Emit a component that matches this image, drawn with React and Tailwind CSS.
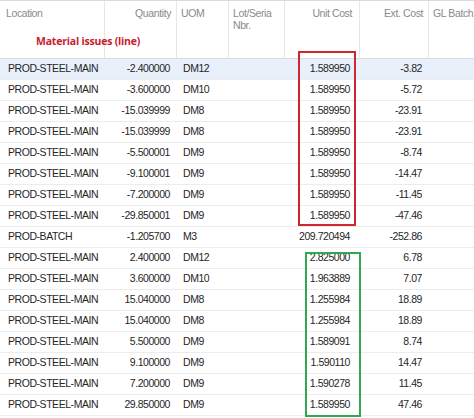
import React from 'react';

const rows = [
  ['PROD-STEEL-MAIN', '-2.400000', 'DM12', '1.589950', '-3.82'],
  ['PROD-STEEL-MAIN', '-3.600000', 'DM10', '1.589950', '-5.72'],
  ['PROD-STEEL-MAIN', '-15.039999', 'DM8', '1.589950', '-23.91'],
  ['PROD-STEEL-MAIN', '-15.039999', 'DM8', '1.589950', '-23.91'],
  ['PROD-STEEL-MAIN', '-5.500001', 'DM9', '1.589950', '-8.74'],
  ['PROD-STEEL-MAIN', '-9.100001', 'DM9', '1.589950', '-14.47'],
  ['PROD-STEEL-MAIN', '-7.200000', 'DM9', '1.589950', '-11.45'],
  ['PROD-STEEL-MAIN', '-29.850001', 'DM9', '1.589950', '-47.46'],
  ['PROD-BATCH', '-1.205700', 'M3', '209.720494', '-252.86'],
  ['PROD-STEEL-MAIN', '2.400000', 'DM12', '2.825000', '6.78'],
  ['PROD-STEEL-MAIN', '3.600000', 'DM10', '1.963889', '7.07'],
  ['PROD-STEEL-MAIN', '15.040000', 'DM8', '1.255984', '18.89'],
  ['PROD-STEEL-MAIN', '15.040000', 'DM8', '1.255984', '18.89'],
  ['PROD-STEEL-MAIN', '5.500000', 'DM9', '1.589091', '8.74'],
  ['PROD-STEEL-MAIN', '9.100000', 'DM9', '1.590110', '14.47'],
  ['PROD-STEEL-MAIN', '7.200000', 'DM9', '1.590278', '11.45'],
  ['PROD-STEEL-MAIN', '29.850000', 'DM9', '1.589950', '47.46'],
];

const cols = 'grid grid-cols-[105px_72px_52px_56px_75px_69px_1fr]';

export default function App() {
  return (
    <div className="relative w-[474px] h-[418px] overflow-hidden bg-white font-['Liberation_Sans',Arial,sans-serif]">
      {/* Header */}
      <div className={`${cols} h-[59px] border-t border-b border-[#dcdcdc] text-[10.5px] leading-[11.5px] tracking-[-0.4px] text-[#8a8a8a]`}>
        <div className="border-r border-[#e6e6e6] pl-[6px] pt-[7px]">Location</div>
        <div className="border-r border-[#e6e6e6] pr-[5px] pt-[7px] text-right">Quantity</div>
        <div className="border-r border-[#e6e6e6] pl-[4px] pt-[7px]">UOM</div>
        <div className="border-r border-[#e6e6e6] pl-[4px] pt-[7px]">Lot/Seria<br />Nbr.</div>
        <div className="border-r border-[#e6e6e6] pr-[7px] pt-[7px] text-right">Unit Cost</div>
        <div className="border-r border-[#e6e6e6] pr-[5px] pt-[7px] text-right">Ext. Cost</div>
        <div className="pl-[4px] pt-[7px] whitespace-nowrap">GL Batch</div>
      </div>

      {/* Rows */}
      {rows.map((r, i) => (
        <div
          key={i}
          className={`${cols} h-[21px] items-center border-b border-[#ececec] text-[10.5px] tracking-[-0.45px] text-[#262626] ${i === 0 ? 'bg-[#e8f1fb]' : 'bg-white'}`}
        >
          <div className="pl-[8px] whitespace-nowrap">{r[0]}</div>
          <div className="pr-[7px] text-right">{r[1]}</div>
          <div className="pl-[6px]">{r[2]}</div>
          <div />
          <div className="pr-[10px] text-right">{r[3]}</div>
          <div className="pr-[7px] text-right">{r[4]}</div>
          <div />
        </div>
      ))}

      {/* Annotations */}
      <div className="absolute left-[36px] top-[34px] text-[10.5px] font-bold tracking-[-0.2px] text-[#c8202f] font-['Open_Sans',sans-serif] whitespace-nowrap">
        Material issues (line)
      </div>
      <div className="absolute left-[298px] top-[51px] w-[58px] h-[175px] border-2 border-[#d0262f]" />
      <div className="absolute left-[305px] top-[252px] w-[56px] h-[165px] border-2 border-[#2fa84f]" />
    </div>
  );
}
